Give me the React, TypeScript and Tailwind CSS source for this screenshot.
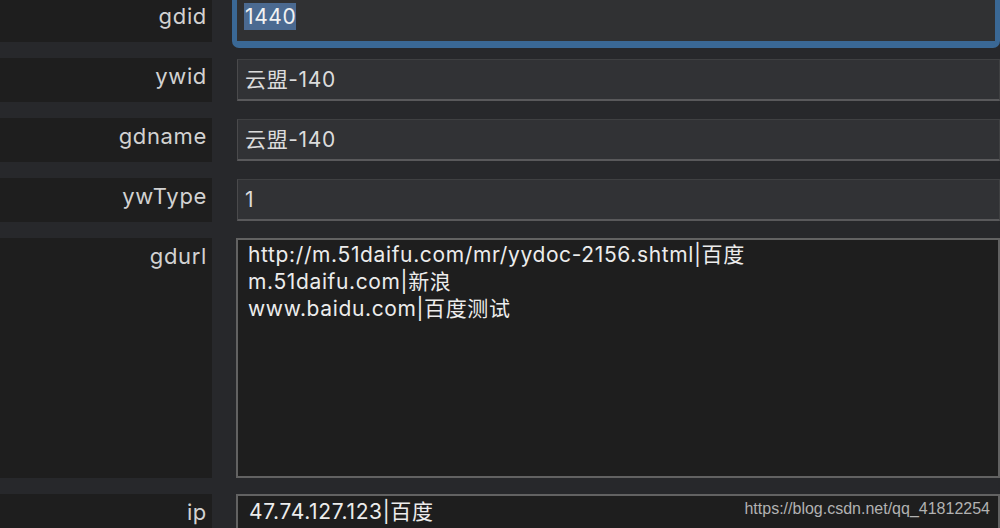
import React from "react";

const font = { fontFamily: 'Inter, "Noto Sans CJK SC", sans-serif' };

function Label({ text, tall }: { text: string; tall?: boolean }) {
  return (
    <div
      className={`w-[212px] shrink-0 bg-[#1e1e1e] text-right pr-[5px] pt-[5px] text-[22px] leading-[26px] tracking-[0.03em] text-[#d2d2d2] ${tall ? "h-[240px]" : "h-[44px]"}`}
    >
      {text}
    </div>
  );
}

function Field({ value }: { value: string }) {
  return (
    <div className="mt-[1px] ml-[25px] flex-1 h-[42px] bg-[#313235] border border-[#3f4042] border-b-2 border-b-[#59595b] border-l-[#4a4a4c] pl-[7px] flex items-center text-[21px] leading-[24px] tracking-[0.03em] text-[#dcdcdc]">
      {value}
    </div>
  );
}

export default function App() {
  return (
    <div
      className="relative w-[1000px] h-[528px] overflow-hidden bg-[#27282b]"
      style={font}
    >
      <div className="-mt-[2px] flex flex-col gap-[16px]">
        {/* gdid (focused) */}
        <div className="flex items-start h-[44px]">
          <Label text="gdid" />
          <div className="-mt-[6px] ml-[20px] flex-1 h-[56px] border-[5px] border-b-[7px] border-[#3a6895] rounded-[7px] bg-[#303133] pl-[7px] pt-[6px]">
            <span className="inline-block bg-[#4b6a91] text-[21px] leading-[27px] tracking-[0.03em] text-[#f2f2f2] pl-[1px]">
              1440
            </span>
          </div>
        </div>
        <div className="flex items-start h-[44px]">
          <Label text="ywid" />
          <Field value="云盟-140" />
        </div>
        <div className="flex items-start h-[44px]">
          <Label text="gdname" />
          <Field value="云盟-140" />
        </div>
        <div className="flex items-start h-[44px]">
          <Label text="ywType" />
          <Field value="1" />
        </div>
        <div className="flex items-start h-[240px]">
          <Label text="gdurl" tall />
          <div className="ml-[24px] flex-1 h-[240px] bg-[#1e1e1e] border-2 border-[#626262] pl-[10px] pt-[1px] text-[21px] leading-[27px] tracking-[0.03em] text-[#ececec]">
            <div>http://m.51daifu.com/mr/yydoc-2156.shtml|百度</div>
            <div>m.51daifu.com|新浪</div>
            <div>www.baidu.com|百度测试</div>
          </div>
        </div>
        <div className="flex items-start h-[44px]">
          <Label text="ip" />
          <div className="ml-[24px] flex-1 h-[44px] bg-[#1e1e1e] border-2 border-[#626262] pl-[11px] pt-[2px] text-[21px] leading-[27px] tracking-[0.03em] text-[#ececec]">
            47.74.127.123|百度
          </div>
        </div>
      </div>
      <div
        className="absolute right-[10px] top-[500px] text-[16px] leading-[18px] text-[#b2b2b2]"
        style={{ fontFamily: '"Liberation Sans", Arial, sans-serif' }}
      >
        https://blog.csdn.net/qq_41812254
      </div>
    </div>
  );
}
